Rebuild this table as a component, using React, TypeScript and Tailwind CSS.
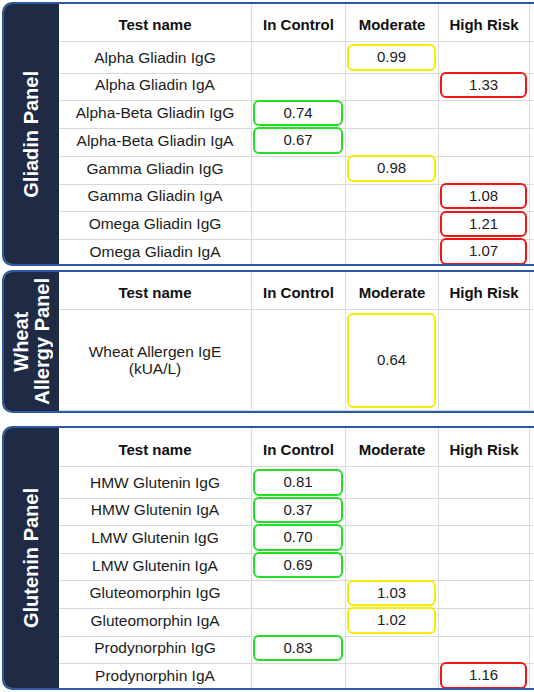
import React from 'react';

type Tone = 'green' | 'yellow' | 'red';
type Row = { name: string; value: string; tone: Tone };

const gliadin: Row[] = [
  { name: 'Alpha Gliadin IgG', value: '0.99', tone: 'yellow' },
  { name: 'Alpha Gliadin IgA', value: '1.33', tone: 'red' },
  { name: 'Alpha-Beta Gliadin IgG', value: '0.74', tone: 'green' },
  { name: 'Alpha-Beta Gliadin IgA', value: '0.67', tone: 'green' },
  { name: 'Gamma Gliadin IgG', value: '0.98', tone: 'yellow' },
  { name: 'Gamma Gliadin IgA', value: '1.08', tone: 'red' },
  { name: 'Omega Gliadin IgG', value: '1.21', tone: 'red' },
  { name: 'Omega Gliadin IgA', value: '1.07', tone: 'red' },
];

const glutenin: Row[] = [
  { name: 'HMW Glutenin IgG', value: '0.81', tone: 'green' },
  { name: 'HMW Glutenin IgA', value: '0.37', tone: 'green' },
  { name: 'LMW Glutenin IgG', value: '0.70', tone: 'green' },
  { name: 'LMW Glutenin IgA', value: '0.69', tone: 'green' },
  { name: 'Gluteomorphin IgG', value: '1.03', tone: 'yellow' },
  { name: 'Gluteomorphin IgA', value: '1.02', tone: 'yellow' },
  { name: 'Prodynorphin IgG', value: '0.83', tone: 'green' },
  { name: 'Prodynorphin IgA', value: '1.16', tone: 'red' },
];

const toneClass: Record<Tone, string> = {
  green: 'border-[#22e022]',
  yellow: 'border-[#f8ec00]',
  red: 'border-[#f01616]',
};

const cols = 'grid grid-cols-[193px_94px_93px_91px_60px]';
const cell = 'border-r border-b border-[#d9d9d9] flex items-center justify-center';

function Pill({ row }: { row: Row }) {
  return (
    <div className={`w-full h-full border-2 rounded-[6px] flex items-center justify-center ${toneClass[row.tone]}`}>
      {row.value}
    </div>
  );
}

function Header({ height }: { height: string }) {
  return (
    <div className={`${cols} ${height} font-bold text-[#111]`}>
      <div className={`${cell} pt-[6px]`}>Test name</div>
      <div className={`${cell} pt-[6px]`}>In Control</div>
      <div className={`${cell} pt-[6px]`}>Moderate</div>
      <div className={`${cell} pt-[6px]`}>High Risk</div>
      <div className={cell}></div>
    </div>
  );
}

function ValueRow({ row, height }: { row: Row; height: string }) {
  const slot = (tone: Tone) => (
    <div className={`${cell} pl-[1px] pr-[2px] py-[2px]`}>{row.tone === tone && <Pill row={row} />}</div>
  );
  return (
    <div className={`${cols} ${height}`}>
      <div className={`${cell} text-[15.5px]`}>{row.name}</div>
      {slot('green')}
      {slot('yellow')}
      {slot('red')}
      <div className={cell}></div>
    </div>
  );
}

function Panel({ label, children, className }: { label: React.ReactNode; children: React.ReactNode; className?: string }) {
  return (
    <div className={`flex w-[600px] border-2 border-[#2c5aa0] rounded-l-[10px] overflow-hidden ${className ?? ''}`}>
      <div className="w-[55px] shrink-0 bg-[#1f2a44] flex items-center justify-center">
        <div className="[writing-mode:vertical-rl] rotate-180 text-white font-bold text-[20px] leading-[21px] text-center">
          {label}
        </div>
      </div>
      <div className="flex flex-col">{children}</div>
    </div>
  );
}

export default function App() {
  return (
    <div
      className="w-[534px] h-[692px] overflow-hidden bg-white pt-[2px] pl-[2px] text-[15px] text-[#1c1c1c]"
      style={{ fontFamily: '"Liberation Sans", Arial, sans-serif' }}
    >
      <Panel label="Gliadin Panel">
        <Header height="h-[38px]" />
        {gliadin.map((r) => (
          <ValueRow key={r.name} row={r} height="h-[27.75px]" />
        ))}
      </Panel>

      <Panel className="mt-[4px]" label={<>Wheat<br />Allergy Panel</>}>
        <Header height="h-[38px]" />
        <div className={`${cols} h-[101px]`}>
          <div className={`${cell} flex-col leading-[17px] text-[15.5px]`}>
            <span>Wheat Allergen IgE</span>
            <span>(kUA/L)</span>
          </div>
          <div className={cell}></div>
          <div className={`${cell} pl-[1px] pr-[2px] pt-[3px] pb-[2px]`}>
            <div className="w-full h-full border-2 rounded-[6px] border-[#f8ec00] flex items-center justify-center">0.64</div>
          </div>
          <div className={cell}></div>
          <div className={cell}></div>
        </div>
      </Panel>

      <Panel className="mt-[13px]" label="Glutenin Panel">
        <Header height="h-[39px]" />
        {glutenin.map((r) => (
          <ValueRow key={r.name} row={r} height="h-[27.625px]" />
        ))}
      </Panel>
    </div>
  );
}
